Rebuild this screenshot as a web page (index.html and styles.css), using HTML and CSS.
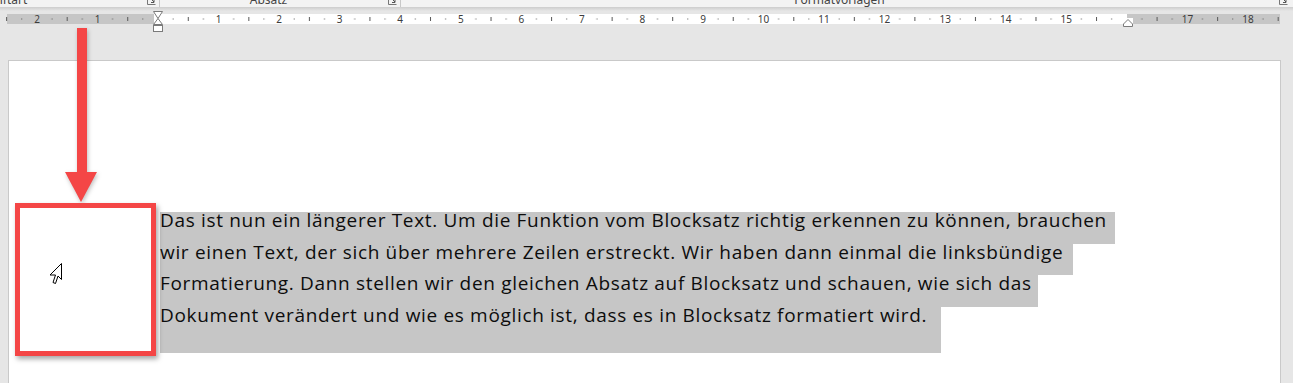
FILE: index.html
```html
<!doctype html>
<html lang="de">
<head>
    <meta charset="utf-8">
    <title>Blocksatz</title>
    <link rel="stylesheet" href="styles.css">
</head>

<body>
<div class="screen">

    <!-- Menüband (abgeschnitten) -->
    <div class="ribbon">
        <div class="group group-font">
            <span class="group-label">Schriftart</span>
            <svg class="launcher" width="11" height="7" viewBox="0 0 11 7">
                <path d="M1.5 -3.5 V4.5 H9.5" fill="none" stroke="#777"/>
                <path d="M4 -2 L8 2 M8 -0.5 V2.5 H5" fill="none" stroke="#555"/>
            </svg>
            <span class="sep"></span>
        </div>
        <div class="group group-para">
            <span class="group-label">Absatz</span>
            <svg class="launcher" width="11" height="7" viewBox="0 0 11 7">
                <path d="M1.5 -3.5 V4.5 H9.5" fill="none" stroke="#777"/>
                <path d="M4 -2 L8 2 M8 -0.5 V2.5 H5" fill="none" stroke="#555"/>
            </svg>
            <span class="sep"></span>
        </div>
        <div class="group group-styles">
            <span class="group-label">Formatvorlagen</span>
            <svg class="launcher" width="11" height="7" viewBox="0 0 11 7">
                <path d="M1.5 -3.5 V4.5 H9.5" fill="none" stroke="#777"/>
                <path d="M4 -2 L8 2 M8 -0.5 V2.5 H5" fill="none" stroke="#555"/>
            </svg>
        </div>
    </div>
    <div class="ribbon-shadow"></div>

    <!-- Lineal -->
    <svg class="ruler" width="1293" height="22" viewBox="0 11 1293 22">
        <defs>
            <pattern id="ticks" patternUnits="userSpaceOnUse" x="158" y="0" width="60.55" height="40">
                <rect x="14.6" y="18.5" width="1" height="1" fill="#555"/>
                <rect x="29.8" y="17" width="1" height="4" fill="#555"/>
                <rect x="44.9" y="18.5" width="1" height="1" fill="#555"/>
            </pattern>
        </defs>
        <rect x="7" y="14" width="151" height="10" fill="#c6c6c6"/>
        <rect x="158" y="14" width="969" height="10" fill="#fff"/>
        <rect x="1127" y="14" width="153" height="10" fill="#c6c6c6"/>
        <rect x="6" y="14" width="1274" height="10" fill="url(#ticks)"/>
        <g class="ruler-num" text-anchor="middle">
            <text x="37" y="23">2</text>
            <text x="97.5" y="23">1</text>
            <text x="218.6" y="23">1</text>
            <text x="279.1" y="23">2</text>
            <text x="339.7" y="23">3</text>
            <text x="400.2" y="23">4</text>
            <text x="460.8" y="23">5</text>
            <text x="521.3" y="23">6</text>
            <text x="581.9" y="23">7</text>
            <text x="642.4" y="23">8</text>
            <text x="703" y="23">9</text>
            <text x="763.5" y="23">10</text>
            <text x="824.1" y="23">11</text>
            <text x="884.6" y="23">12</text>
            <text x="945.2" y="23">13</text>
            <text x="1005.7" y="23">14</text>
            <text x="1066.3" y="23">15</text>
            <text x="1187.4" y="23">17</text>
            <text x="1247.9" y="23">18</text>
        </g>
        <!-- Einzugsmarken -->
        <g fill="#fff" stroke="#7a7a7a" stroke-width="1">
            <rect x="154" y="14" width="8" height="10" stroke="none"/>
            <path d="M153.5 11.5 H162.5 L158 18.5 Z"/>
            <path d="M158 18.5 L162.5 24.5 H153.5 Z"/>
            <rect x="153.5" y="25.5" width="9" height="6"/>
            <rect x="1123" y="18" width="10" height="8" stroke="none"/>
            <path d="M1128 19.5 L1132.5 24 V26.5 H1123.5 V24 Z"/>
        </g>
    </svg>

    <!-- Dokument -->
    <div class="workspace">
        <div class="page">
            <div class="paragraph">
                <div class="sel-line line-1">Das ist nun ein längerer Text. Um die Funktion vom Blocksatz richtig erkennen zu können, brauchen</div>
                <div class="sel-line line-2">wir einen Text, der sich über mehrere Zeilen erstreckt. Wir haben dann einmal die linksbündige</div>
                <div class="sel-line line-3">Formatierung. Dann stellen wir den gleichen Absatz auf Blocksatz und schauen, wie sich das</div>
                <div class="sel-line line-4">Dokument verändert und wie es möglich ist, dass es in Blocksatz formatiert wird.</div>
            </div>
        </div>
    </div>

    <!-- Markierung -->
    <svg class="note-arrow" width="110" height="210" viewBox="0 0 110 210">
        <rect x="77" y="28" width="10" height="148" fill="#f44646"/>
        <path d="M65 172 H97 L81 202 Z" fill="#f44646"/>
    </svg>
    <div class="note-box"></div>

    <svg class="cursor" width="14" height="22" viewBox="0 0 14 22">
        <path d="M12.5 0.5 V16.5 L9 13 L6.5 20.5 L4 19.5 L6.5 12 H1 Z" fill="#fff" stroke="#000" stroke-width="1" stroke-linejoin="miter"/>
    </svg>
</div>
</body>
</html>
```

FILE: styles.css
```css
/* Word-Ansicht: Menüband, Lineal, Seite */
* {
    box-sizing: border-box;
}

body {
    margin: 0;
    width: 1293px;
    height: 383px;
    overflow: hidden;
    background-color: #e6e6e6;
    font-family: "Noto Sans", "Open Sans", sans-serif;
}

.screen {
    position: relative;
    height: 383px;
}

/* Menüband */
.ribbon {
    display: flex;
    height: 7px;
    overflow: hidden;
    background-color: #f3f3f3;
    font-size: 12px;
    color: #444;
}

.group {
    display: flex;
    align-items: flex-end;
    height: 7px;
}

.group-font {
    width: 160px;
}

.group-para {
    width: 241px;
}

.group-styles {
    flex: 1;
    padding-right: 4px;
}

.group-label {
    flex: 1;
    line-height: 14px;
    white-space: nowrap;
    text-align: center;
}

.group-font .group-label {
    text-align: left;
    margin-left: -25px;
}

.group-para .group-label {
    padding-right: 10px;
}

.launcher {
    display: block;
    flex: none;
    align-self: flex-start;
}

.sep {
    width: 1px;
    height: 7px;
    margin-left: 2px;
    background-color: #c8c8c8;
}

.ribbon-shadow {
    height: 4px;
    background: linear-gradient(#cdcdcd, #e6e6e6);
}

/* Lineal */
.ruler {
    display: block;
}

.ruler-num {
    font-family: "Noto Sans", sans-serif;
    font-size: 10px;
    fill: #3c3c3c;
}

/* Seite */
.workspace {
    padding: 27px 12px 0 8px;
}

.page {
    height: 340px;
    padding: 151px 0 0 151px;
    background-color: #fff;
    border: 1px solid #c9c9c9;
    border-bottom: 0;
}

.paragraph {
    font-family: "Open Sans", "Noto Sans", sans-serif;
    font-size: 19px;
    letter-spacing: 0.67px;
    color: #0d0d0d;
}

.sel-line {
    width: fit-content;
    height: 31.5px;
    padding-top: 1px;
    line-height: 14px;
    white-space: nowrap;
    background-color: #c6c6c6;
}

.line-1 {
    padding-right: 8px;
}

.line-2 {
    padding-right: 10px;
}

.line-3 {
    padding-right: 6px;
}

.line-4 {
    height: 46.5px;
    padding-right: 14px;
}

/* Markierung */
.note-arrow {
    position: absolute;
    left: 0;
    top: 0;
    filter: drop-shadow(1px 2px 2px rgba(0, 0, 0, 0.25));
}

.note-box {
    position: absolute;
    left: 15px;
    top: 203px;
    width: 141px;
    height: 153px;
    border: 5px solid #f44646;
    background-color: #fff;
    box-shadow: 2px 3px 5px rgba(0, 0, 0, 0.35);
}

.cursor {
    position: absolute;
    left: 49px;
    top: 263px;
}
```
